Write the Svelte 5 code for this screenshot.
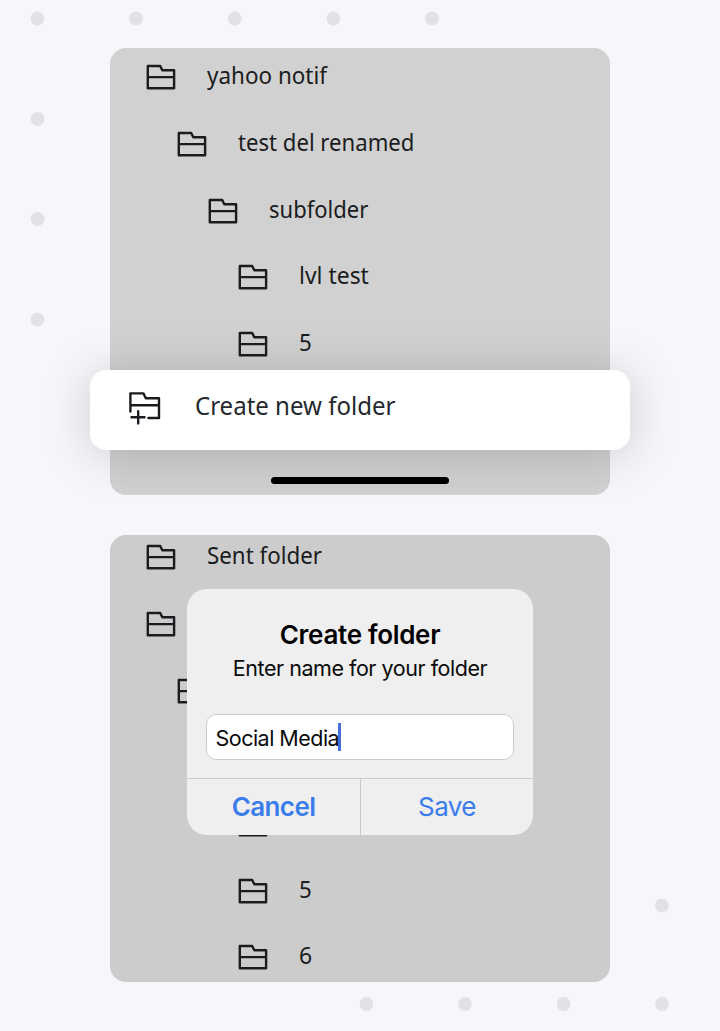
<script>
  const dots = [
    [37.5, 18.5], [136, 18.5], [234.7, 18.5], [333.5, 18.5], [432, 18.5],
    [37.5, 119], [37.5, 219], [37.5, 319.5],
    [662, 905.5], [366.5, 1004], [465, 1004], [563.5, 1004], [662, 1004]
  ];
  const folders = [
    { name: 'yahoo notif', level: 0, fit: 0.935 },
    { name: 'test del renamed', level: 1, fit: 0.922 },
    { name: 'subfolder', level: 2, fit: 0.917 },
    { name: 'lvl test', level: 3, fit: 0.955 },
    { name: '5', level: 3, fit: 0.93 }
  ];
  const behind = [
    { name: 'Sent folder', level: 0, fit: 0.93 },
    { name: '', level: 0, fit: 1 },
    { name: '', level: 1, fit: 1 },
    { name: '', level: 2, fit: 1 },
    { name: '', level: 3, fit: 1 },
    { name: '5', level: 3, fit: 0.93 },
    { name: '6', level: 3, fit: 0.96 }
  ];
</script>

{#snippet row(folder)}
  <div class="row" style="padding-left: {36 + folder.level * 30.8}px">
    <svg class="folder" width="30" height="26" viewBox="0 0 30 26" aria-hidden="true">
      <path d="M1.8 2H14.2L16.3 6.3H28.1V24.2H1.8ZM1.8 13.1H28.1" />
    </svg>
    <span class="name" style="transform: scaleX({folder.fit})">{folder.name}</span>
  </div>
{/snippet}

<main>
  <svg class="dots" width="720" height="1031" aria-hidden="true">
    {#each dots as [x, y]}<circle cx={x} cy={y} r="6.9" />{/each}
  </svg>

  <section class="panel first">
    {#each folders as folder}{@render row(folder)}{/each}
    <div class="create">
      <svg class="folder" width="34" height="34" viewBox="0 0 34 34" aria-hidden="true">
        <path d="M2.4 20.5V2.4H15.5L17.8 7.3H31V27H20.4M2.4 14.3H31M10.2 20.2V32.4M3.5 26.3H16.5" />
      </svg>
      <span>Create new folder</span>
    </div>
    <div class="home"></div>
  </section>

  <section class="panel second">
    {#each behind as folder}{@render row(folder)}{/each}
    <div class="dialog">
      <h1>Create folder</h1>
      <p>Enter name for your folder</p>
      <div class="field"><span>Social Media</span><i></i></div>
      <div class="actions">
        <button class="cancel">Cancel</button>
        <button class="save">Save</button>
      </div>
    </div>
  </section>
</main>

<style>
  :global(body) { margin: 0; }
  main {
    position: relative;
    box-sizing: border-box;
    width: 720px;
    height: 1031px;
    padding: 48px 110px 49px;
    display: flex;
    flex-direction: column;
    gap: 40px;
    overflow: hidden;
    background: #f6f7fb;
    color: #1b1c20;
    font-family: "Noto Sans", sans-serif;
  }
  .dots { position: absolute; inset: 0; fill: #e1e2e6; }
  .panel {
    position: relative;
    box-sizing: border-box;
    width: 500px;
    height: 447px;
    padding-top: 1px;
    border-radius: 16px;
    background: #d1d1d1;
  }
  .second { background: #ccc; overflow: hidden; }
  .row {
    position: relative;
    top: -5px;
    box-sizing: border-box;
    height: 66.7px;
    display: flex;
    align-items: center;
    gap: 31px;
  }
  .second .row { top: -12px; }
  .folder {
    flex: none;
    fill: none;
    stroke: #1b1c20;
    stroke-width: 2.4;
    stroke-linejoin: round;
    stroke-linecap: round;
  }
  .name {
    position: relative;
    top: -2px;
    font-size: 24px;
    line-height: 32px;
    white-space: nowrap;
    transform-origin: left center;
  }
  .create {
    position: absolute;
    left: -20px;
    top: 322px;
    box-sizing: border-box;
    width: 540px;
    height: 80px;
    padding: 0 0 6px 38px;
    display: flex;
    align-items: center;
    gap: 32.5px;
    border-radius: 16px;
    background: #fff;
    box-shadow: 0 4px 50px rgba(0, 0, 0, .18);
    color: #25282d;
    font-size: 26px;
    white-space: nowrap;
  }
  .create .folder { position: relative; top: 1px; }
  .create span {
    position: relative;
    top: -2px;
    transform: scaleX(.924);
    transform-origin: left center;
  }
  .home {
    position: absolute;
    left: 161px;
    bottom: 11px;
    width: 178px;
    height: 7px;
    border-radius: 4px;
    background: #000;
  }
  .dialog {
    position: absolute;
    left: 77px;
    top: 54px;
    width: 346px;
    height: 246px;
    display: flex;
    flex-direction: column;
    border-radius: 20px;
    background: #efefef;
    color: #0b0b0b;
    font-family: Inter, sans-serif;
    overflow: hidden;
  }
  h1 {
    margin: 29px 0 0;
    font-size: 26px;
    line-height: 34px;
    font-weight: 600;
    letter-spacing: -.3px;
    text-align: center;
    color: #000;
  }
  p {
    margin: 2px 0 0;
    font-size: 21.5px;
    line-height: 28px;
    letter-spacing: -.46px;
    text-align: center;
    white-space: nowrap;
  }
  .field {
    box-sizing: border-box;
    height: 46px;
    margin: 32px 19px 18px;
    padding-left: 8.5px;
    display: flex;
    align-items: center;
    border: 1px solid #cdcdcd;
    border-radius: 10px;
    background: #fff;
    font-size: 21.5px;
    letter-spacing: -.52px;
  }
  .field span { position: relative; top: .5px; }
  .field i { width: 2.5px; height: 28px; margin-left: -1px; background: #466fdc; }
  .actions {
    flex: 1;
    display: grid;
    grid-template-columns: 174px 1fr;
    border-top: 1px solid #cbcbcb;
  }
  button {
    margin: 0;
    padding: 0;
    border: 0;
    background: none;
    color: #3b7cec;
    font: 400 26px/34px Inter, sans-serif;
    letter-spacing: -.6px;
  }
  .cancel { border-right: 1px solid #cbcbcb; font-weight: 600; }
</style>
